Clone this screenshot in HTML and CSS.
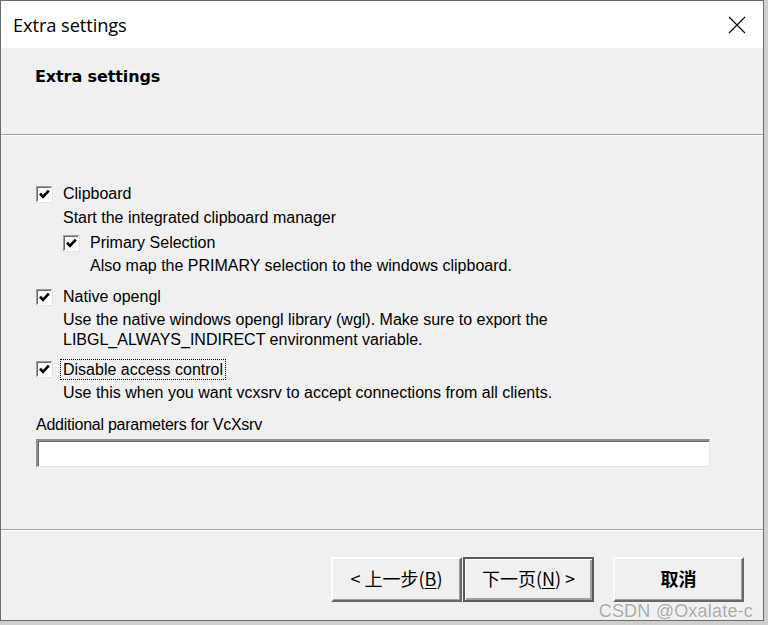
FILE: index.html
```html
<!DOCTYPE html>
<html>
<head>
<meta charset="utf-8">
<link rel="stylesheet" href="styles.css">
</head>
<body>
<div class="window">
  <div class="titlebar">
    <span class="title">Extra settings</span>
    <svg class="close" width="18" height="18" viewBox="0 0 18 18"><path d="M1 1 L17 17 M17 1 L1 17" stroke="#000" stroke-width="1.1" fill="none"/></svg>
  </div>
  <div class="header">
    <div class="header-title">Extra settings</div>
  </div>
  <div class="content">
    <div class="opt opt-clip">
      <div class="row">
        <svg class="cb" width="17" height="17" viewBox="0 0 17 17"><rect x="0" y="0" width="17" height="17" fill="#e3e3e3"/><rect x="0" y="0" width="16" height="16" fill="#a0a0a0"/><rect x="1" y="1" width="15" height="15" fill="#fff"/><rect x="1" y="1" width="14" height="14" fill="#696969"/><rect x="2" y="2" width="13" height="13" fill="#fff"/><path d="M4 7.6 L7 10.8 L12.8 4.6" stroke="#000" stroke-width="2.7" fill="none"/></svg>
        <span class="label">Clipboard</span>
      </div>
      <div class="desc">Start the integrated clipboard manager</div>
      <div class="sub">
        <div class="row">
          <svg class="cb" width="17" height="17" viewBox="0 0 17 17"><rect x="0" y="0" width="17" height="17" fill="#e3e3e3"/><rect x="0" y="0" width="16" height="16" fill="#a0a0a0"/><rect x="1" y="1" width="15" height="15" fill="#fff"/><rect x="1" y="1" width="14" height="14" fill="#696969"/><rect x="2" y="2" width="13" height="13" fill="#fff"/><path d="M4 7.6 L7 10.8 L12.8 4.6" stroke="#000" stroke-width="2.7" fill="none"/></svg>
          <span class="label">Primary Selection</span>
        </div>
        <div class="desc desc-tight">Also map the PRIMARY selection to the windows clipboard.</div>
      </div>
    </div>
    <div class="opt opt-gl">
      <div class="row">
        <svg class="cb" width="17" height="17" viewBox="0 0 17 17"><rect x="0" y="0" width="17" height="17" fill="#e3e3e3"/><rect x="0" y="0" width="16" height="16" fill="#a0a0a0"/><rect x="1" y="1" width="15" height="15" fill="#fff"/><rect x="1" y="1" width="14" height="14" fill="#696969"/><rect x="2" y="2" width="13" height="13" fill="#fff"/><path d="M4 7.6 L7 10.8 L12.8 4.6" stroke="#000" stroke-width="2.7" fill="none"/></svg>
        <span class="label">Native opengl</span>
      </div>
      <div class="desc desc-tight">Use the native windows opengl library (wgl). Make sure to export the<br>LIBGL_ALWAYS_INDIRECT environment variable.</div>
    </div>
    <div class="opt opt-ac">
      <div class="row">
        <svg class="cb" width="17" height="17" viewBox="0 0 17 17"><rect x="0" y="0" width="17" height="17" fill="#e3e3e3"/><rect x="0" y="0" width="16" height="16" fill="#a0a0a0"/><rect x="1" y="1" width="15" height="15" fill="#fff"/><rect x="1" y="1" width="14" height="14" fill="#696969"/><rect x="2" y="2" width="13" height="13" fill="#fff"/><path d="M4 7.6 L7 10.8 L12.8 4.6" stroke="#000" stroke-width="2.7" fill="none"/></svg>
        <span class="label focus">Disable access control</span>
      </div>
      <div class="desc">Use this when you want vcxsrv to accept connections from all clients.</div>
    </div>
    <div class="params-label">Additional parameters for VcXsrv</div>
    <div class="input"></div>
  </div>
  <div class="footer">
    <div class="btn">&lt; 上一步(<u>B</u>)</div>
    <div class="btn btn-default">下一页(<u>N</u>) &gt;</div>
    <div class="btn btn-cancel">取消</div>
    <div class="watermark">CSDN @Oxalate-c</div>
  </div>
</div>
</body>
</html>
```
FILE: styles.css
```css
html, body {
  margin: 0;
  padding: 0;
}
body {
  width: 768px;
  height: 625px;
  background: #cfcfcf;
  overflow: hidden;
  font-family: "Liberation Sans", Arial, sans-serif;
  color: #000;
}
.window {
  position: relative;
  width: 764px;
  height: 621px;
  box-sizing: border-box;
  border: 1px solid #6b6b6b;
  background: #f0f0f0;
  display: flex;
  flex-direction: column;
}
.titlebar {
  height: 47px;
  flex: none;
  background: #fff;
  display: flex;
  align-items: center;
  justify-content: space-between;
  padding: 0 17px 0 12px;
}
.title {
  font-family: "Open Sans", "Noto Sans", sans-serif;
  font-size: 18.3px;
  color: #000;
  margin-top: -1px;
  letter-spacing: -0.1px;
}
.close {
  display: block;
}
.header {
  height: 87px;
  flex: none;
  background: #f0f0f0;
  border-bottom: 1px solid #a0a0a0;
  box-shadow: 0 1px 0 #ffffff;
  box-sizing: border-box;
  padding: 19px 0 0 34px;
}
.header-title {
  font-family: "DejaVu Sans", Verdana, sans-serif;
  font-weight: bold;
  font-size: 16px;
  line-height: 20px;
  letter-spacing: -0.1px;
}
.content {
  flex: 1;
  padding: 49px 0 0 35px;
  font-size: 16px;
  line-height: 20px;
}
.row {
  display: flex;
  align-items: center;
  height: 20px;
}
.cb {
  display: block;
  flex: none;
  margin-right: 10px;
}
.label {
  white-space: nowrap;
}
.focus {
  outline: 1px dotted #000;
  outline-offset: 0px;
  padding: 0 2px;
  margin-left: -2px;
  line-height: 19px;
}
.desc {
  margin: 4px 0 0 27px;
  white-space: nowrap;
}
.desc-tight {
  margin-top: 3px;
}
.sub {
  margin: 5px 0 0 27px;
}
.sub .desc {
  margin-left: 27px;
}
.opt-gl {
  margin-top: 11px;
}
.opt-ac {
  margin-top: 9px;
}
.params-label {
  margin-top: 12px;
  font-size: 16px;
  letter-spacing: -0.25px;
  line-height: 20px;
}
.input {
  margin-top: 4px;
  width: 674px;
  height: 28px;
  box-sizing: border-box;
  background: #fff;
  border-top: 2px solid #8f8f8f;
  border-left: 2px solid #8f8f8f;
  border-right: 1px solid #e3e3e3;
  border-bottom: 1px solid #e3e3e3;
  box-shadow: inset 1px 1px 0 #696969;
}
.footer {
  position: relative;
  height: 91px;
  flex: none;
  box-sizing: border-box;
  border-top: 1px solid #a0a0a0;
  box-shadow: inset 0 1px 0 #ffffff;
  display: flex;
  align-items: flex-start;
  padding: 27px 0 0 330px;
}
.btn {
  width: 131px;
  height: 45px;
  box-sizing: border-box;
  background: #f0f0f0;
  border-top: 2px solid #ffffff;
  border-left: 2px solid #ffffff;
  border-right: 2px solid #696969;
  border-bottom: 2px solid #696969;
  box-shadow: inset -1px -1px 0 #a0a0a0;
  display: flex;
  align-items: center;
  justify-content: center;
  font-family: "Noto Sans CJK SC", "Liberation Sans", sans-serif;
  font-size: 18px;
  color: #000;
  white-space: nowrap;
  padding-bottom: 3px;
}
.btn u {
  text-decoration-thickness: 1px;
  text-underline-offset: 2px;
}
.btn-default {
  margin-left: 1px;
  border: 2px solid #5a5a5a;
  box-shadow: inset 1px 1px 0 #ffffff, inset -2px -2px 0 #a0a0a0;
}
.btn-cancel {
  margin-left: 19px;
  font-weight: bold;
}
.watermark {
  position: absolute;
  right: 10px;
  bottom: -2px;
  font-family: "Liberation Sans", Arial, sans-serif;
  font-size: 18px;
  color: #a9a9a9;
  text-shadow: 0 0 2px #ffffff, 0 0 1px #ffffff;
  letter-spacing: 0.2px;
}
```
